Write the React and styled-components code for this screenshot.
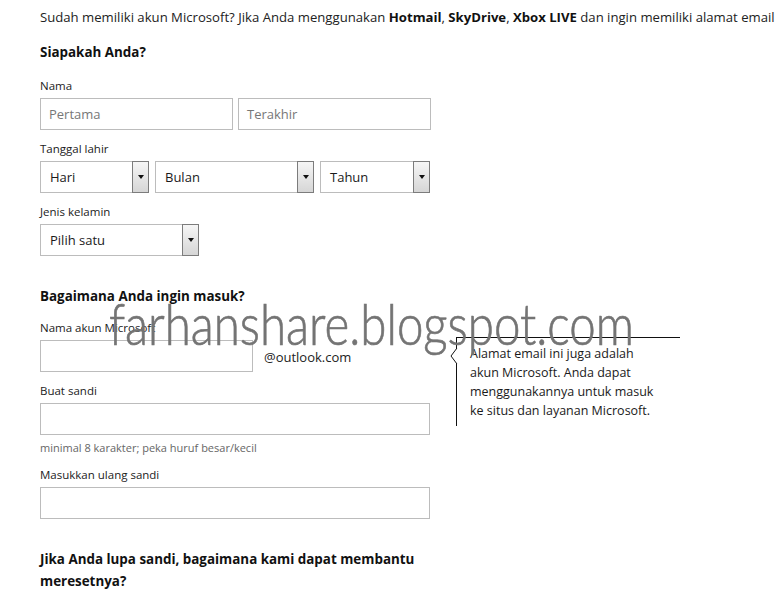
import React from "react";
import styled, { createGlobalStyle } from "styled-components";

const Global = createGlobalStyle`
  html, body { margin: 0; padding: 0; background: #fff; }
  body { font-family: "Open Sans", "Noto Sans", sans-serif; color: #1a1a1a; }
  * { box-sizing: border-box; }
`;

const Page = styled.div`
  position: relative;
  width: 783px;
  height: 592px;
  overflow: hidden;
  padding: 7px 0 0 40px;
`;

const Intro = styled.p`
  margin: 0;
  font-size: 13.15px;
  line-height: 20px;
  white-space: nowrap;
  color: #222;
  b { font-weight: 700; color: #111; }
`;

const Heading = styled.h2`
  margin: ${(p) => p.$top}px 0 0;
  width: ${(p) => p.$width || 400}px;
  font-size: 13.4px;
  font-weight: 700;
  line-height: 22px;
  color: #111;
`;

const Field = styled.div`
  margin-top: ${(p) => p.$top}px;
  display: flex;
  flex-direction: column;
  gap: 4px;
`;

const Label = styled.label`
  font-size: 11.5px;
  line-height: 16px;
  color: #222;
`;

const Row = styled.div`
  display: flex;
  align-items: center;
  gap: ${(p) => p.$gap || 5}px;
`;

const Input = styled.div`
  width: ${(p) => p.$w}px;
  height: 32px;
  border: 1px solid #bcbcbc;
  background: #fff;
  padding-left: 8px;
  display: flex;
  align-items: center;
  font-size: 13px;
  color: #777;
`;

const SelectBox = styled.div`
  width: ${(p) => p.$w}px;
  height: 32px;
  border: 1px solid #bcbcbc;
  border-right: none;
  display: flex;
  align-items: stretch;
  background: #fff;
`;

const SelectText = styled.span`
  flex: 1;
  display: flex;
  align-items: center;
  padding-left: 9px;
  font-size: 13px;
  color: #1a1a1a;
`;

const ArrowBtn = styled.span`
  width: 17px;
  margin: -1px 0;
  border: 1px solid #7c7c7c;
  background: linear-gradient(#f6f6f6, #d6d6d6);
  display: flex;
  align-items: center;
  justify-content: center;
  &::after {
    content: "";
    border-left: 3.5px solid transparent;
    border-right: 3.5px solid transparent;
    border-top: 4px solid #111;
  }
`;

const Suffix = styled.span`
  font-size: 13px;
  color: #222;
  margin-left: 6px;
  margin-top: 2px;
`;

const Hint = styled.div`
  margin-top: 5px;
  font-size: 11px;
  line-height: 16px;
  color: #666;
`;

const Callout = styled.div`
  position: absolute;
  left: 456px;
  top: 337px;
  width: 224px;
  height: 89px;
  border-top: 1px solid #111;
  border-left: 1px solid #111;
  padding: 6px 0 0 13px;
  font-size: 12.5px;
  line-height: 19px;
  color: #1a1a1a;
`;

const Notch = styled.svg`
  position: absolute;
  left: -7px;
  top: 10px;
`;

const CalloutText = styled.div`
  width: 192px;
`;

const Watermark = styled.div`
  position: absolute;
  left: 109px;
  top: 288px;
  font-family: "Lato", sans-serif;
  font-weight: 300;
  font-size: 58px;
  line-height: 70px;
  color: #747474;
  -webkit-text-stroke: 0.7px #747474;
  white-space: nowrap;
  pointer-events: none;
  transform-origin: left center;
  transform: scaleX(0.818);
`;

const Select = ({ w, children }) => (
  <SelectBox $w={w}>
    <SelectText>{children}</SelectText>
    <ArrowBtn />
  </SelectBox>
);

export default function App() {
  return (
    <Page>
      <Global />
      <Intro>
        Sudah memiliki akun Microsoft? Jika Anda menggunakan <b>Hotmail</b>, <b>SkyDrive</b>,{" "}
        <b>Xbox LIVE</b> dan ingin memiliki alamat email
      </Intro>

      <Heading $top={14}>Siapakah Anda?</Heading>

      <Field $top={15}>
        <Label>Nama</Label>
        <Row $gap={5}>
          <Input $w={193}>Pertama</Input>
          <Input $w={193}>Terakhir</Input>
        </Row>
      </Field>

      <Field $top={11}>
        <Label>Tanggal lahir</Label>
        <Row $gap={6}>
          <Select w={109}>Hari</Select>
          <Select w={159}>Bulan</Select>
          <Select w={110}>Tahun</Select>
        </Row>
      </Field>

      <Field $top={11}>
        <Label>Jenis kelamin</Label>
        <Row>
          <Select w={159}>Pilih satu</Select>
        </Row>
      </Field>

      <Heading $top={29}>Bagaimana Anda ingin masuk?</Heading>

      <Field $top={13}>
        <Label>Nama akun Microsoft</Label>
        <Row $gap={0}>
          <Input $w={213} />
          <Suffix>@outlook.com</Suffix>
        </Row>
      </Field>

      <Field $top={11}>
        <Label>Buat sandi</Label>
        <Input $w={390} />
      </Field>
      <Hint>minimal 8 karakter; peka huruf besar/kecil</Hint>

      <Field $top={11}>
        <Label>Masukkan ulang sandi</Label>
        <Input $w={390} />
      </Field>

      <Heading $top={29} $width={400}>
        Jika Anda lupa sandi, bagaimana kami dapat membantu meresetnya?
      </Heading>

      <Callout>
        <Notch width="8" height="16" viewBox="0 0 8 16">
          <path d="M7 0 L1 8 L7 16" fill="#fff" stroke="#111" strokeWidth="1" />
          <rect x="7" y="0.5" width="2" height="15" fill="#fff" />
        </Notch>
        <CalloutText>
          Alamat email ini juga adalah akun Microsoft. Anda dapat menggunakannya untuk masuk ke situs dan
          layanan Microsoft.
        </CalloutText>
      </Callout>

      <Watermark>farhanshare.blogspot.com</Watermark>
    </Page>
  );
}
